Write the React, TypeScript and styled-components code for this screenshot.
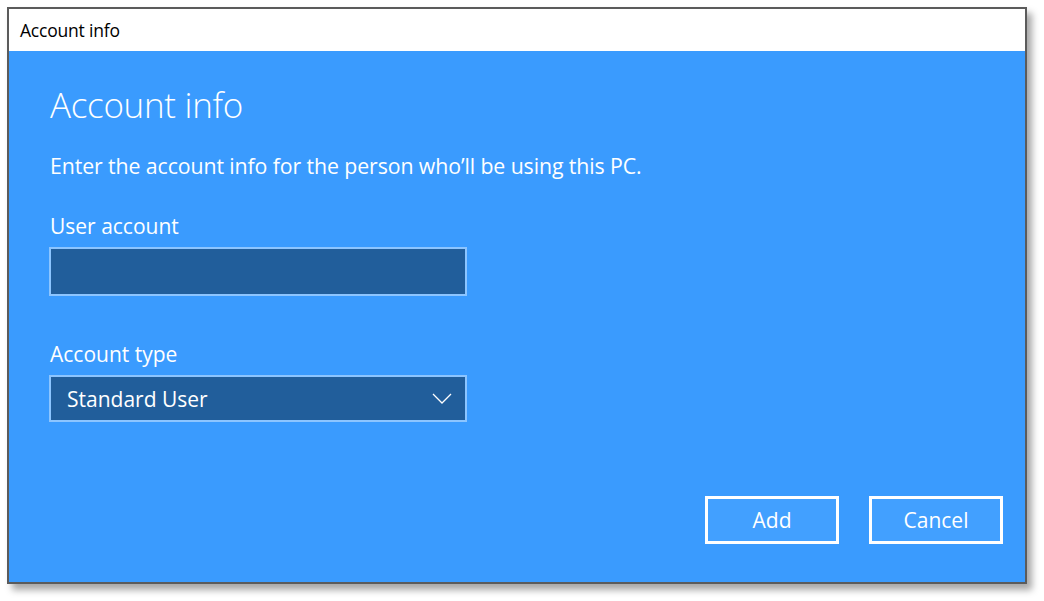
import React from "react";
import styled, { createGlobalStyle } from "styled-components";

const GlobalStyle = createGlobalStyle`
  html, body {
    margin: 0;
    padding: 0;
    background: #ffffff;
    font-family: "Open Sans", "Noto Sans", "Liberation Sans", sans-serif;
  }
`;

const Page = styled.div`
  width: 1044px;
  height: 601px;
  padding: 7px 0 0 7px;
  box-sizing: border-box;
`;

const Window = styled.div`
  width: 1020px;
  height: 577px;
  box-sizing: border-box;
  border: 2px solid #5b5b5b;
  box-shadow: 5px 6px 7px rgba(0, 0, 0, 0.35);
  display: flex;
  flex-direction: column;
  background: #3a9bfe;
`;

const TitleBar = styled.div`
  height: 42px;
  flex: none;
  background: #ffffff;
  display: flex;
  align-items: center;
  padding-left: 11px;
  font-size: 17.5px;
  color: #000000;
  letter-spacing: -0.2px;
`;

const Content = styled.div`
  flex: 1;
  display: flex;
  flex-direction: column;
  padding: 32px 22px 0 41px;
  color: #ffffff;
`;

const Heading = styled.h1`
  margin: 0;
  font-size: 35px;
  font-weight: 300;
  line-height: 44px;
  letter-spacing: -0.3px;
`;

const Subtitle = styled.p`
  margin: 25px 0 0;
  font-size: 21.3px;
  line-height: 28px;
  letter-spacing: -0.1px;
`;

const Label = styled.div<{ $top: number }>`
  margin-top: ${(p) => p.$top}px;
  font-size: 21px;
  line-height: 28px;
`;

const Field = styled.div<{ $height: number }>`
  margin: 7px 0 0 -1px;
  width: 418px;
  height: ${(p) => p.$height}px;
  box-sizing: border-box;
  border: 2px solid #8cc5ff;
  background: #215e9b;
  display: flex;
  align-items: center;
  justify-content: space-between;
  padding: 0 13px 0 16px;
  font-size: 21px;
  color: #ffffff;
`;

const Actions = styled.div`
  margin-top: auto;
  margin-bottom: 38px;
  display: flex;
  justify-content: flex-end;
  gap: 30px;
`;

const Button = styled.button`
  width: 134px;
  height: 48px;
  box-sizing: border-box;
  border: 3px solid #ffffff;
  background: #42a0ff;
  color: #ffffff;
  font-family: inherit;
  font-size: 21px;
  padding: 0;
`;

const Chevron = () => (
  <svg width="20" height="11" viewBox="0 0 20 11" fill="none">
    <path d="M1 1 L10 10 L19 1" stroke="#ffffff" strokeWidth="1.3" />
  </svg>
);

export default function App() {
  return (
    <>
      <GlobalStyle />
      <Page>
        <Window>
          <TitleBar>Account info</TitleBar>
          <Content>
            <Heading>Account info</Heading>
            <Subtitle>Enter the account info for the person who’ll be using this PC.</Subtitle>
            <Label $top={32}>User account</Label>
            <Field $height={49} />
            <Label $top={44}>Account type</Label>
            <Field $height={47}>
              <span>Standard User</span>
              <Chevron />
            </Field>
            <Actions>
              <Button>Add</Button>
              <Button>Cancel</Button>
            </Actions>
          </Content>
        </Window>
      </Page>
    </>
  );
}
